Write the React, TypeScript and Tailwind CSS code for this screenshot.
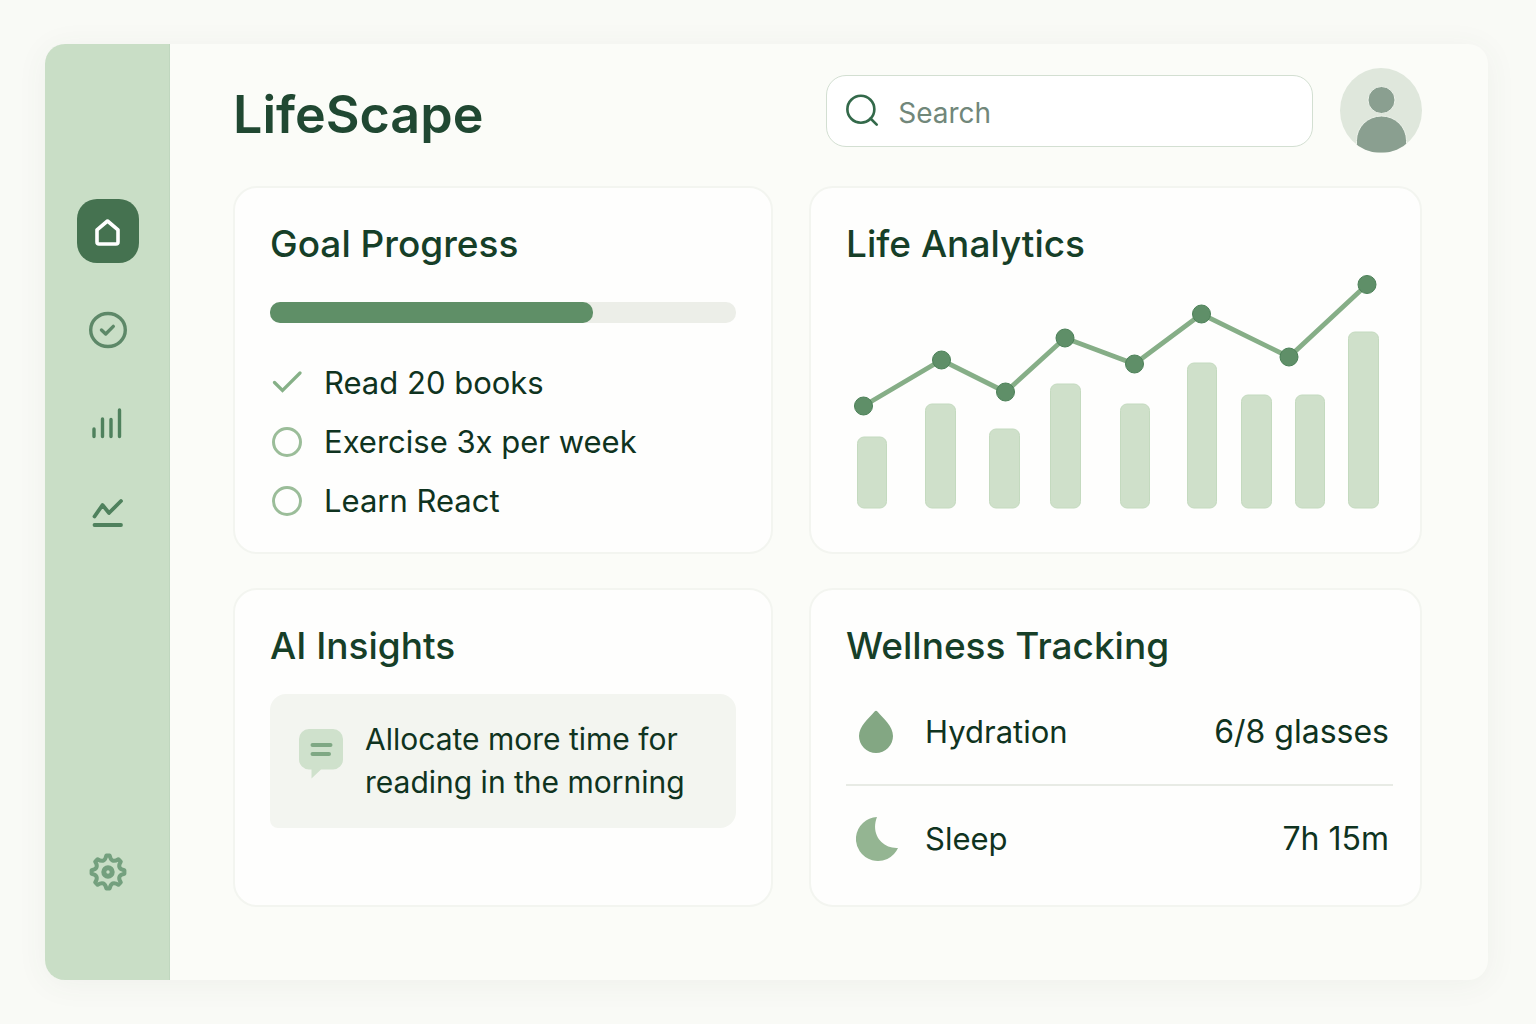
import { useState, type ReactNode } from "react";

const navItems: { label: string; icon: ReactNode }[] = [
  { label: "Goals", icon: <CheckCircleIcon /> },
  { label: "Statistics", icon: <BarsIcon /> },
  { label: "Trends", icon: <TrendIcon /> },
];

const initialGoals = [
  { id: "books", label: "Read 20 books", done: true },
  { id: "exercise", label: "Exercise 3x per week", done: false },
  { id: "react", label: "Learn React", done: false },
];

const bars = [
  { x: 11, width: 30, height: 72 },
  { x: 79, width: 31, height: 105 },
  { x: 143, width: 31, height: 80 },
  { x: 204, width: 31, height: 125 },
  { x: 274, width: 30, height: 105 },
  { x: 341, width: 30, height: 146 },
  { x: 395, width: 31, height: 114 },
  { x: 449, width: 30, height: 114 },
  { x: 502, width: 31, height: 177 },
];

const points = [
  [17.5, 134],
  [95.5, 88],
  [159.5, 120],
  [219, 66],
  [288.5, 92],
  [355.5, 42],
  [443, 85],
  [521, 12.5],
];

function HomeIcon() {
  return (
    <svg width="40" height="40" viewBox="0 0 40 40" fill="none" stroke="#fff" strokeWidth="3.6" strokeLinejoin="round" aria-hidden="true">
      <path d="M9 18.800 19.500 10 30 18.800V31a2 2 0 0 1-2 2H11a2 2 0 0 1-2-2Z" />
    </svg>
  );
}

function CheckCircleIcon() {
  return (
    <svg width="40" height="40" viewBox="0 0 40 40" fill="none" stroke="#5d8868" strokeWidth="3.4" strokeLinecap="round" strokeLinejoin="round" aria-hidden="true">
      <ellipse cx="20" cy="20" rx="17.300" ry="16.500" />
      <path d="m13.500 20 4.200 4 7.600-7.600" />
    </svg>
  );
}

function BarsIcon() {
  return (
    <svg width="40" height="40" viewBox="0 0 40 40" fill="none" stroke="#4f815d" strokeWidth="3.4" strokeLinecap="round" aria-hidden="true">
      <path d="M6 28v7.500M14.500 18v17.500M23 18.500v17M31.500 9v26.500" />
    </svg>
  );
}

function TrendIcon() {
  return (
    <svg width="40" height="40" viewBox="0 0 40 40" fill="none" stroke="#4f815d" strokeWidth="3.8" strokeLinecap="round" strokeLinejoin="round" aria-hidden="true">
      <path d="m6.500 24.500 8-11.500 6.500 8L33 9" />
      <path d="M6.500 33H33" />
    </svg>
  );
}

function GearIcon() {
  return (
    <svg width="40" height="40" viewBox="-20 -20 40 40" fill="none" stroke="#74a07e" strokeWidth="4" strokeLinejoin="round" aria-hidden="true">
      <path d="M-1.700-16.400H1.700Q3.400-8.300 10.400-12.800L12.800-10.400Q8.300-3.400 16.400-1.700V1.700Q8.300 3.400 12.800 10.400L10.400 12.800Q3.400 8.300 1.700 16.400H-1.700Q-3.400 8.300-10.400 12.800L-12.800 10.400Q-8.300 3.400-16.400 1.700V-1.700Q-8.300-3.400-12.800-10.400L-10.400-12.800Q-3.400-8.300-1.700-16.400Z" />
      <circle r="4.200" strokeWidth="5" />
    </svg>
  );
}

function SearchIcon() {
  return (
    <svg width="40" height="40" viewBox="0 0 40 40" fill="none" stroke="#33694a" strokeWidth="3" strokeLinecap="round" aria-hidden="true">
      <circle cx="18" cy="18" r="15.300" />
      <path d="m29 28.500 7 7" />
    </svg>
  );
}

function Sidebar() {
  return (
    <aside className="flex w-[125px] shrink-0 flex-col items-center justify-between rounded-l-[20px] bg-[#c9dec6] pt-[155px] pb-20 pl-px shadow-[inset_-1px_0_0_#c0d7bf]">
      <nav className="flex flex-col items-center gap-[35px]" aria-label="Main">
        <button type="button" aria-label="Home" className="mb-1 flex h-16 w-[62px] items-center justify-center rounded-[20px] bg-[#457250]">
          <HomeIcon />
        </button>
        {navItems.map((item) => (
          <button key={item.label} type="button" aria-label={item.label} className="flex size-14 items-center justify-center">
            {item.icon}
          </button>
        ))}
      </nav>
      <button type="button" aria-label="Settings" className="flex size-14 items-center justify-center">
        <GearIcon />
      </button>
    </aside>
  );
}

function Header() {
  return (
    <header className="flex items-center gap-[27px]">
      <h1 className="flex-1 pt-2 text-[52px] leading-[64px] font-semibold text-[#204832]">LifeScape</h1>
      <label className="flex h-[72px] w-[487px] items-center gap-[18px] rounded-[20px] border border-[#d3dfd2] bg-white px-[18px]">
        <SearchIcon />
        <input
          type="search"
          placeholder="Search"
          aria-label="Search"
          className="w-full min-w-0 bg-transparent pt-1 text-[28px] leading-9 text-[#163c27] outline-none placeholder:text-[#71877a] placeholder:opacity-100"
        />
      </label>
      <button type="button" aria-label="Profile" className="h-[85px] w-[82px] shrink-0">
        <svg width="82" height="85" viewBox="0 0 82 85" aria-hidden="true">
          <defs>
            <clipPath id="avatar">
              <ellipse cx="41" cy="42.500" rx="41" ry="42.500" />
            </clipPath>
          </defs>
          <g clipPath="url(#avatar)">
            <rect width="82" height="85" fill="#dfe7dc" />
            <path d="M16.500 85V72.500a25 24.500 0 0 1 50 0V85Z" fill="#8a9f90" stroke="#eef3eb" />
            <circle cx="41.500" cy="32" r="13.500" fill="#8a9f90" stroke="#eef3eb" />
          </g>
        </svg>
      </button>
    </header>
  );
}

function Card({ title, children }: { title: string; children: ReactNode }) {
  return (
    <section className="rounded-3xl border-2 border-[#f3f5f0] bg-[#fefefd] pt-[34px] pr-[27px] pb-3 pl-[35px]">
      <h2 className="text-[37px] leading-[44px] font-medium text-[#163f28]">{title}</h2>
      {children}
    </section>
  );
}

function GoalProgress() {
  const [goals, setGoals] = useState(initialGoals);

  const toggle = (id: string) =>
    setGoals(goals.map((g) => (g.id === id ? { ...g, done: !g.done } : g)));

  return (
    <Card title="Goal Progress">
      <div className="mr-2 mb-2.5">
        <div
          role="progressbar"
          aria-label="Goal progress"
          aria-valuenow={69}
          aria-valuemin={0}
          aria-valuemax={100}
          className="mt-9 h-[21px] rounded-[10px] bg-[#eceee8]"
        >
          <div className="h-full rounded-[10px] bg-[#5f8f67]" style={{ width: "69.4%" }} />
        </div>
        <ul className="mt-[30px]">
          {goals.map((goal) => (
            <li key={goal.id}>
              <label className="flex items-center gap-[22px] text-[31px] leading-[59px] text-[#0f3320]">
                <span className="relative ml-0.5 size-[30px]">
                  <input
                    type="checkbox"
                    checked={goal.done}
                    onChange={() => toggle(goal.id)}
                    className="peer block size-[30px] appearance-none rounded-full border-3 border-[#9bbd99] checked:border-transparent"
                  />
                  <svg className="pointer-events-none absolute inset-0 hidden peer-checked:block" viewBox="0 0 30 30" fill="none" stroke="#86b087" strokeWidth="3.200" strokeLinecap="round" aria-hidden="true">
                    <path d="m2.500 14.500 8 8L28 5" />
                  </svg>
                </span>
                {goal.label}
              </label>
            </li>
          ))}
        </ul>
      </div>
    </Card>
  );
}

function LifeAnalytics() {
  return (
    <Card title="Life Analytics">
      <svg className="mt-1.5 block w-full" viewBox="0 0 547 238" role="img" aria-label="Life analytics chart">
        {bars.map((bar) => (
          <rect
            key={bar.x}
            x={bar.x + 0.5}
            y={237 - bar.height}
            width={bar.width - 1}
            height={bar.height - 1}
            rx="6.500"
            fill="#cfe0ca"
            stroke="#c4dabf"
          />
        ))}
        <polyline points={points.map((p) => p.join(",")).join(" ")} fill="none" stroke="#86ae87" strokeWidth="4.800" />
        {points.map(([x, y]) => (
          <circle key={x} cx={x} cy={y} r="9" fill="#5f8f68" stroke="#4b8057" />
        ))}
      </svg>
    </Card>
  );
}

function AiInsights() {
  return (
    <Card title="AI Insights">
      <div className="mt-[26px] mr-2 flex gap-[22px] rounded-2xl rounded-bl-lg bg-[#f3f5f0] py-6 pr-4 pl-[29px]">
        <svg className="mt-[11px] shrink-0" width="44" height="50" viewBox="0 0 44 50" aria-hidden="true">
          <path d="M10 0h24a10 10 0 0 1 10 10v20.500a10 10 0 0 1-10 10H22L12.500 49.500V40.500H10a10 10 0 0 1-10-10V10A10 10 0 0 1 10 0Z" fill="#cfe1cc" />
          <path d="M13.500 16h18M13.500 25h16.500" stroke="#7fa884" strokeWidth="4" strokeLinecap="round" />
        </svg>
        <p className="text-[30px] leading-[43px] text-[#0f3320]">
          Allocate more time for
          <br />
          reading in the morning
        </p>
      </div>
    </Card>
  );
}

function WellnessRow({ icon, label, value }: { icon: ReactNode; label: string; value: string }) {
  return (
    <li className="flex h-[106px] items-center pr-1 pl-[10px] text-[31px] leading-10 text-[#0f3320]">
      {icon}
      <span className="ml-[25px] flex-1">{label}</span>
      <span className="text-[32px]">{value}</span>
    </li>
  );
}

function WellnessTracking() {
  return (
    <Card title="Wellness Tracking">
      <ul className="mt-3 mb-px divide-y-2 divide-[#e8ebe5]">
        <WellnessRow
          label="Hydration"
          value="6/8 glasses"
          icon={
            <svg width="44" height="46" viewBox="0 0 44 46" fill="#83a783" aria-hidden="true">
              <path d="M18.600 2.600q1.400-1.600 2.800 0C27.500 9.500 37 17.500 37 27a17 17 0 0 1-34 0C3 17.500 12.500 9.500 18.600 2.600Z" />
            </svg>
          }
        />
        <WellnessRow
          label="Sleep"
          value="7h 15m"
          icon={
            <svg width="44" height="46" viewBox="0 0 44 46" fill="#94b592" aria-hidden="true">
              <path d="M21 1A22 22 0 1 0 42 32C27 33 14 19 21 1Z" />
            </svg>
          }
        />
      </ul>
    </Card>
  );
}

export default function App() {
  return (
    <div className="flex min-h-screen bg-[#f9faf6] pt-11 pr-12 pb-11 pl-[45px] font-['Inter','Liberation_Sans',sans-serif]">
      <div className="flex flex-1 rounded-[20px] bg-[#fbfcf8] shadow-[0_4px_32px_rgba(60,80,60,0.06)]">
        <Sidebar />
        <main className="min-w-0 flex-1 pt-6 pr-[66px] pb-16 pl-[63px]">
          <Header />
          <div className="mt-[33px] grid grid-cols-[540fr_613fr] gap-x-9 gap-y-[34px]">
            <GoalProgress />
            <LifeAnalytics />
            <AiInsights />
            <WellnessTracking />
          </div>
        </main>
      </div>
    </div>
  );
}
